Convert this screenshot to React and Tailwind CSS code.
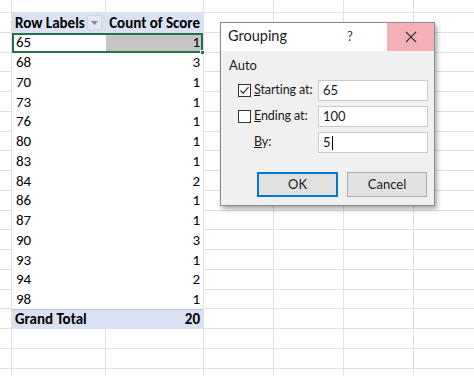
import React from 'react';

const data = [
  ['65', 1], ['68', 3], ['70', 1], ['73', 1], ['76', 1], ['80', 1], ['83', 1],
  ['84', 2], ['86', 1], ['87', 1], ['90', 3], ['93', 1], ['94', 2], ['98', 1],
];

const cellFont = { fontFamily: 'Carlito, Lato, "Open Sans", sans-serif' };
const uiFont = { fontFamily: '"Segoe UI", Lato, "Noto Sans", sans-serif' };

const Blank = ({ w }) => <div className={`${w} shrink-0 border-r border-b border-[#e1e1e1]`} />;

const Tail = () => (
  <>
    <Blank w="w-[70px]" />
    <Blank w="w-[70px]" />
    <Blank w="w-[70px]" />
    <div className="flex-1 border-b border-[#e1e1e1]" />
  </>
);

const PivotRow = ({ children, bg = 'bg-white', extra = '' }) => (
  <div className="flex h-[19.75px]">
    <Blank w="w-[12px]" />
    <div className={`w-[192px] shrink-0 flex border-r border-[#e1e1e1] ${bg} ${extra}`}>{children}</div>
    <Tail />
  </div>
);

const Check = ({ checked }) => (
  <div className="w-[13px] h-[13px] shrink-0 border border-[#333] bg-white flex items-center justify-center">
    {checked && (
      <svg width="11" height="11" viewBox="0 0 11 11">
        <path d="M1.5 5.5 L4.2 8.2 L9.5 2.2" fill="none" stroke="#222" strokeWidth="1.1" />
      </svg>
    )}
  </div>
);

const Field = ({ ul, rest, checkbox, checked, value, caret }) => (
  <div className="flex items-center h-[21px]">
    <div className="w-[97px] shrink-0 flex items-center pl-[17px] gap-[3px] text-[12.5px] tracking-[-0.1px] text-[#1a1a1a] whitespace-nowrap">
      {checkbox ? <Check checked={checked} /> : <span className="w-[13px]" />}
      <span>
        <span className="underline">{ul}</span>
        {rest}
      </span>
    </div>
    <div className="w-[110px] h-[21px] bg-white border border-[#c9c9c9] flex items-center pl-[4px] text-[13px] text-[#1a1a1a]">
      {value}
      {caret && <span className="w-px h-[14px] bg-black ml-px" />}
    </div>
  </div>
);

const Dialog = () => (
  <div
    className="absolute left-[220px] top-[22px] w-[215px] h-[184px] bg-[#f0f0f0] border border-[#8c8c8c] shadow-[2px_3px_5px_rgba(0,0,0,0.35)] flex flex-col"
    style={uiFont}
  >
    <div className="h-[28px] bg-white flex items-center">
      <span className="pl-[7px] flex-1 text-[14.5px] text-[#1a1a1a] -mt-[2px]">Grouping</span>
      <span className="w-[40px] text-[13px] text-[#333]">?</span>
      <div className="w-[47px] h-full bg-[#f3b0b6] flex items-center justify-center">
        <svg width="12" height="12" viewBox="0 0 12 12">
          <path d="M1 1 L11 11 M11 1 L1 11" stroke="#333" strokeWidth="1.1" />
        </svg>
      </div>
    </div>
    <div className="flex flex-col pt-[5px]">
      <span className="pl-[8px] text-[13px] text-[#1a1a1a] h-[24px]">Auto</span>
      <div className="flex flex-col gap-[5px]">
        <Field checkbox checked ul="S" rest="tarting at:" value="65" />
        <Field checkbox ul="E" rest="nding at:" value="100" />
        <Field ul="B" rest="y:" value="5" caret />
      </div>
      <div className="flex gap-[9px] pl-[36px] pt-[19px]">
        <div className="w-[81px] h-[25px] bg-[#e1e1e1] border-2 border-[#0078d7] flex items-center justify-center text-[13px] text-[#1a1a1a]">
          OK
        </div>
        <div className="w-[80px] h-[25px] bg-[#e1e1e1] border border-[#adadad] flex items-center justify-center text-[13px] text-[#1a1a1a]">
          Cancel
        </div>
      </div>
    </div>
  </div>
);

export default function App() {
  return (
    <div className="relative w-[474px] h-[376px] overflow-hidden bg-white text-black" style={cellFont}>
      <div className="flex h-[13px]">
        <Blank w="w-[12px]" />
        <Blank w="w-[94px]" />
        <Blank w="w-[98px]" />
        <Tail />
      </div>

      <PivotRow bg="bg-[#d9e1f2]">
        <div className="w-[94px] flex items-center pl-[3px] font-bold text-[15px]">
          <span className="flex-1">Row Labels</span>
          <span className="w-[15px] h-[15px] mr-[4px] bg-[#e4e9f5] border border-[#cdd6ea] flex items-center justify-center">
            <svg width="7" height="4" viewBox="0 0 7 4">
              <path d="M0 0 L7 0 L3.5 4 Z" fill="#8a8a8a" />
            </svg>
          </span>
        </div>
        <div className="flex-1 flex items-center justify-end pr-[3px] font-bold text-[15px]">Count of Score</div>
      </PivotRow>

      {data.map(([label, n], i) => (
        <PivotRow key={label}>
          {i === 0 ? (
            <div className="relative flex w-full border-2 border-[#217346]">
              <div className="w-[92px] flex items-center pl-[2px] text-[15px] bg-white">{label}</div>
              <div className="flex-1 flex items-center justify-end pr-[1px] text-[15px] bg-[#c6c6c6]">{n}</div>
              <div className="absolute -right-[4px] -bottom-[4px] w-[5px] h-[5px] bg-[#217346] border border-white" />
            </div>
          ) : (
            <>
              <div className="w-[94px] flex items-center pl-[4px] text-[15px]">{label}</div>
              <div className="flex-1 flex items-center justify-end pr-[3px] text-[15px]">{n}</div>
            </>
          )}
        </PivotRow>
      ))}

      <PivotRow bg="bg-[#d9e1f2]" extra="border-t border-t-[#b4c6e7]">
        <div className="w-[94px] flex items-center pl-[3px] font-bold text-[15px]">Grand Total</div>
        <div className="flex-1 flex items-center justify-end pr-[3px] font-bold text-[15px]">20</div>
      </PivotRow>

      {[0, 1, 2].map(r => (
        <div key={r} className="flex h-[20px]">
          <Blank w="w-[12px]" />
          <Blank w="w-[94px]" />
          <Blank w="w-[98px]" />
          <Tail />
        </div>
      ))}

      <Dialog />
    </div>
  );
}
